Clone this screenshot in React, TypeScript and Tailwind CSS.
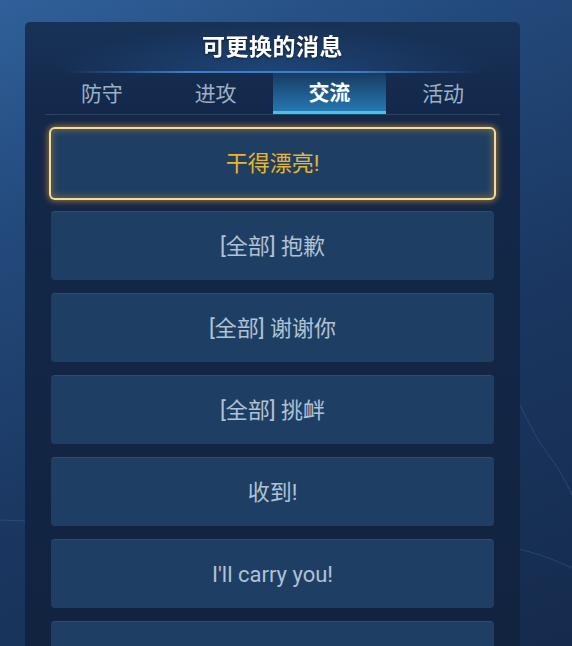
import React from "react";

const tabs = ["防守", "进攻", "交流", "活动"];
const messages = ["干得漂亮!", "[全部] 抱歉", "[全部] 谢谢你", "[全部] 挑衅", "收到!", "I'll carry you!", ""];

const App = () => {
  const active = 2;
  const selected = 0;

  return (
    <div
      className="w-[572px] h-[646px] overflow-hidden relative pl-[25px] pt-[22px] bg-[linear-gradient(155deg,#30609a_0%,#234a7c_25%,#1a3660_60%,#152b4d_100%)]"
      style={{ fontFamily: 'Roboto, "Noto Sans CJK SC", sans-serif' }}
    >
      {/* faint background streaks */}
      <svg className="absolute left-0 top-0 opacity-25" width="572" height="646" viewBox="0 0 572 646" fill="none">
        <path d="M500 370 C 520 400, 530 430, 545 450 S 565 480, 572 495" stroke="#5a88c0" strokeWidth="1" />
        <path d="M500 545 C 530 550, 555 560, 572 568" stroke="#5a88c0" strokeWidth="1" />
        <path d="M0 520 L 28 521" stroke="#5a88c0" strokeWidth="1" />
      </svg>

      <div className="relative w-[495px] h-full rounded-t-[5px] bg-[linear-gradient(180deg,#183257_0%,#13284a_90px,#11233f_100%)]">
        {/* header */}
        <div className="relative h-[49px] pt-[4px] flex items-center justify-center bg-[radial-gradient(ellipse_at_50%_100%,rgba(40,100,170,0.45)_0%,rgba(40,100,170,0)_65%)]">
          <span className="text-white text-[23px] font-bold tracking-[0.5px] drop-shadow-[0_1px_1px_rgba(0,0,0,0.5)]">
            可更换的消息
          </span>
        </div>
        <div className="mx-[40px] h-[2px] bg-[linear-gradient(90deg,rgba(60,130,200,0)_0%,#3d7fc4_30%,#3d7fc4_70%,rgba(60,130,200,0)_100%)]" />

        {/* tabs */}
        <div className="mx-[20px] grid grid-cols-4 border-b border-[#2b4260]">
          {tabs.map((t, i) => (
            <div
              key={t}
              className={`h-[41px] pt-[3px] flex items-center justify-center text-[21px] ${
                i === active
                  ? "text-white font-bold bg-[linear-gradient(180deg,#173b62_0%,#2677b0_100%)] border-b-[3px] border-[#3cc6ea] -mb-px"
                  : "text-[#9db0c6]"
              }`}
            >
              {t}
            </div>
          ))}
        </div>

        {/* list */}
        <div className="mt-[14px] px-[26px] flex flex-col gap-[13px]">
          {messages.map((m, i) =>
            i === selected ? (
              <div
                key={i}
                className="h-[69px] flex items-center justify-center rounded-[4px] bg-[#1e3f63] text-[#e9b52a] text-[22px] shadow-[0_0_0_2px_#f4dca0,0_0_6px_3px_rgba(230,160,40,0.65),inset_0_0_6px_2px_rgba(230,160,40,0.35)]"
              >
                {m}
              </div>
            ) : (
              <div
                key={i}
                className="h-[69px] shrink-0 flex items-center justify-center rounded-[4px] bg-[#1e3f63] border-t border-[#25507a] text-[#b0c2d5] text-[22px]"
              >
                {m}
              </div>
            )
          )}
        </div>
      </div>
    </div>
  );
};

export default App;
